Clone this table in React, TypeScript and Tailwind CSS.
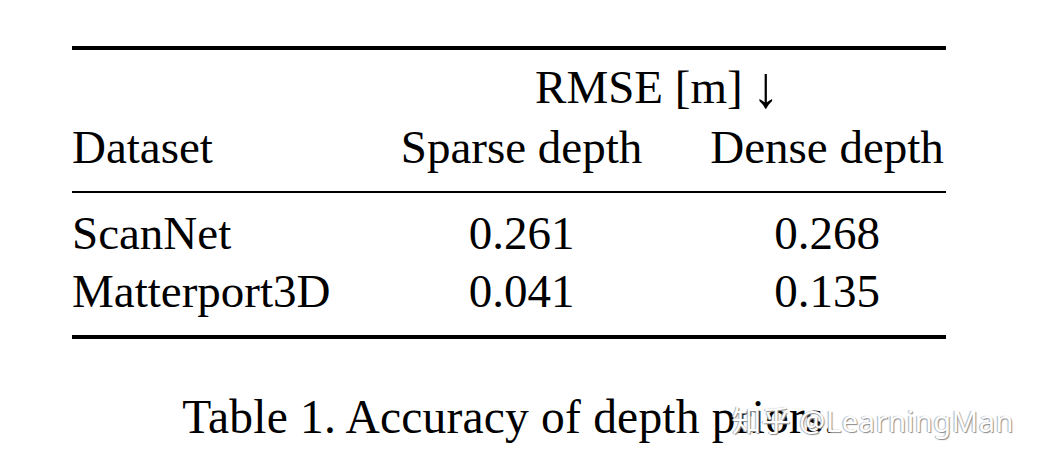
const rows = [
  { name: "ScanNet", sparse: "0.261", dense: "0.268" },
  { name: "Matterport3D", sparse: "0.041", dense: "0.135" },
];

const App = () => {
  return (
    <div className="relative h-[472px] w-[1044px] overflow-hidden bg-white text-black font-['Liberation_Serif',serif]">
      <div className="ml-[72px] w-[874px] pt-[46px]">
        <div className="h-[4px] bg-black" />

        <div className="grid grid-cols-[263px_243px_238px] gap-x-[65px] pt-[7px] text-[47px] leading-[60px] whitespace-nowrap">
          <div />
          <div className="col-span-2 pr-[33px] text-center">
            RMSE [m] <span className="inline-block origin-bottom translate-y-[7px] scale-x-[1.15] scale-y-[1.25]">↓</span>
          </div>
          <div>Dataset</div>
          <div className="text-center">Sparse depth</div>
          <div className="text-center">Dense depth</div>
        </div>

        <div className="mt-[14px] h-[2px] bg-black" />

        <div className="grid grid-cols-[263px_243px_238px] gap-x-[65px] pt-[11px] text-[47px] leading-[58px] whitespace-nowrap">
          {rows.map((row) => (
            <>
              <div key={row.name}>{row.name}</div>
              <div className="text-center">{row.sparse}</div>
              <div className="text-center">{row.dense}</div>
            </>
          ))}
        </div>

        <div className="mt-[15px] h-[4px] bg-black" />

        <div className="mt-[49px] text-center text-[47.5px] leading-[58px] tracking-[0.2px] whitespace-nowrap">
          Table 1. Accuracy of depth priors.
        </div>
      </div>

      {/* watermark over the caption */}
      <div className="absolute left-[732px] top-[403px] text-[29px] leading-[36px] tracking-[0.6px] whitespace-nowrap text-white font-['Noto_Sans','Noto_Sans_CJK_SC',sans-serif] [text-shadow:1px_1px_1px_#8a8a8a,-1px_0_1px_#b0b0b0]">
        知乎 @LearningMan
      </div>
    </div>
  );
};

export default App;
